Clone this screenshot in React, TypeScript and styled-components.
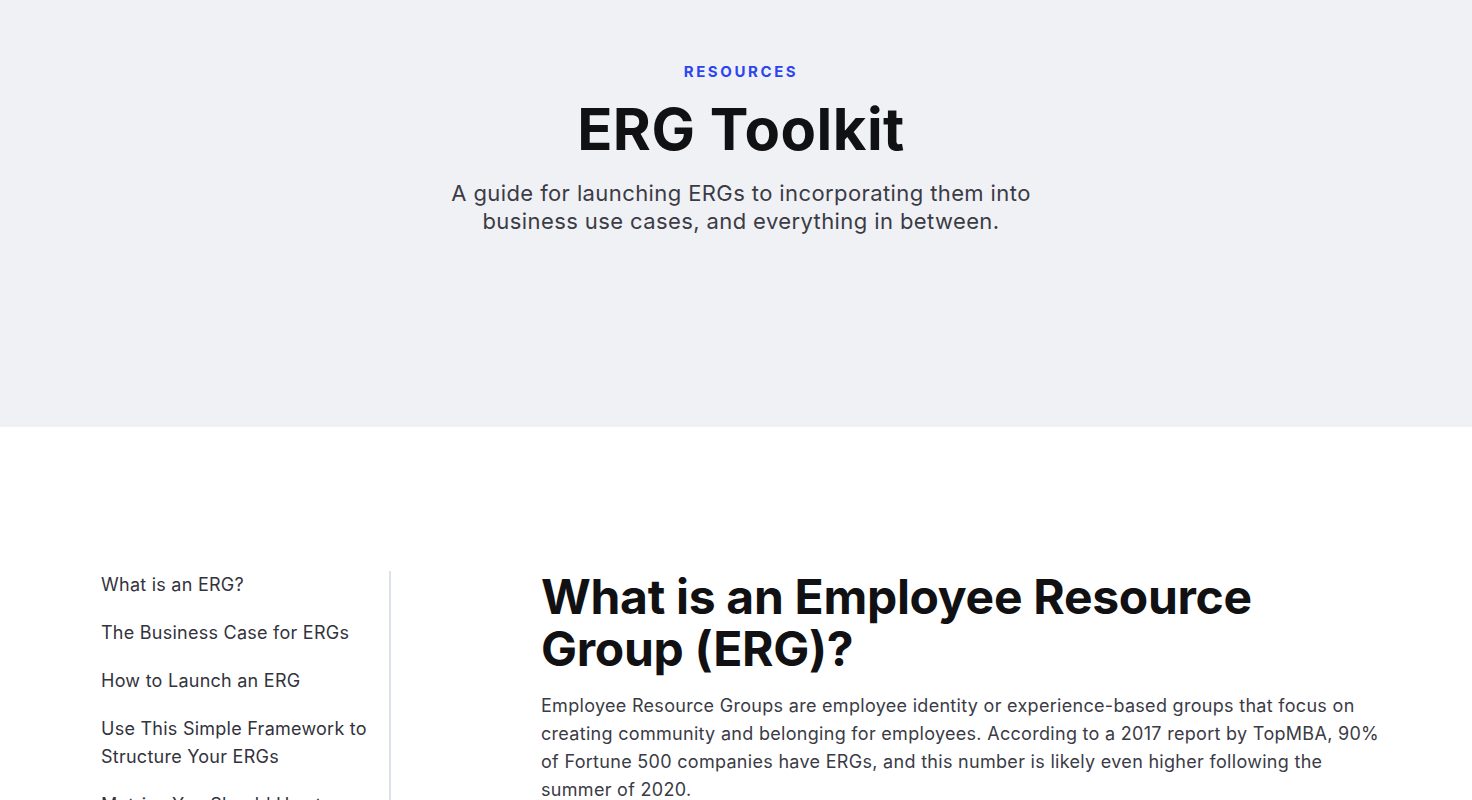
import React from "react";
import styled, { createGlobalStyle } from "styled-components";

const Global = createGlobalStyle`
  * { box-sizing: border-box; }
  html, body { margin: 0; padding: 0; background: #ffffff; }
  body { font-family: Inter, "Noto Sans", sans-serif; -webkit-font-smoothing: antialiased; }
`;

const Hero = styled.header`
  background: #f0f1f5;
  height: 427px;
  display: flex;
  flex-direction: column;
  align-items: center;
  padding: 62px 0 0 10px;
  text-align: center;
`;

const Eyebrow = styled.div`
  color: #2b45f0;
  font-weight: 700;
  font-size: 15px;
  line-height: 20px;
  letter-spacing: 2.6px;
`;

const Title = styled.h1`
  margin: 15px 0 0;
  font-weight: 700;
  font-size: 58px;
  line-height: 64px;
  color: #111114;
  letter-spacing: 0.5px;
`;

const Subtitle = styled.p`
  margin: 18px 0 0;
  width: 620px;
  font-size: 22px;
  line-height: 28px;
  color: #3b3b45;
  letter-spacing: 0.4px;
`;

const Section = styled.section`
  display: flex;
  padding: 144px 0 0 101px;
  gap: 150px;
`;

const Sidebar = styled.nav`
  width: 290px;
  flex-shrink: 0;
  border-right: 2px solid #dde1ea;
  display: flex;
  flex-direction: column;
  gap: 20px;
  padding-right: 18px;
  min-height: 300px;
`;

const NavItem = styled.a`
  font-size: 18px;
  line-height: 28px;
  color: #33333d;
  text-decoration: none;
  letter-spacing: 0.25px;
`;

const Main = styled.main`
  width: 840px;
`;

const Heading = styled.h2`
  margin: 0;
  font-weight: 700;
  font-size: 48px;
  line-height: 52px;
  color: #111114;
  letter-spacing: -0.3px;
`;

const Body = styled.p`
  margin: 17px 0 0;
  font-size: 18px;
  line-height: 28px;
  color: #3b3b45;
  letter-spacing: 0.3px;
`;

const navItems = [
  "What is an ERG?",
  "The Business Case for ERGs",
  "How to Launch an ERG",
  "Use This Simple Framework to Structure Your ERGs",
  "Metrics You Should Use to Measure Success",
];

export default function App() {
  return (
    <>
      <Global />
      <Hero>
        <Eyebrow>RESOURCES</Eyebrow>
        <Title>ERG Toolkit</Title>
        <Subtitle>
          A guide for launching ERGs to incorporating them into business use cases, and everything in between.
        </Subtitle>
      </Hero>
      <Section>
        <Sidebar>
          {navItems.map((t) => (
            <NavItem key={t} href="#">{t}</NavItem>
          ))}
        </Sidebar>
        <Main>
          <Heading>What is an Employee Resource Group (ERG)?</Heading>
          <Body>
            Employee Resource Groups are employee identity or experience-based groups that focus on creating
            community and belonging for employees. According to a 2017 report by TopMBA, 90% of Fortune 500
            companies have ERGs, and this number is likely even higher following the summer of 2020.
          </Body>
        </Main>
      </Section>
    </>
  );
}
